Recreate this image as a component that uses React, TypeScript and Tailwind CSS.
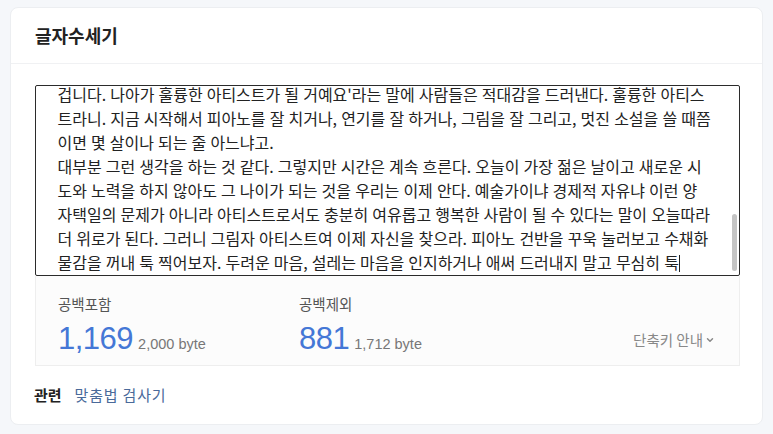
import React from 'react';
import { ChevronDown } from 'lucide-react';

const LINES = [
  "겁니다. 나아가 훌륭한 아티스트가 될 거예요'라는 말에 사람들은 적대감을 드러낸다. 훌륭한 아티스",
  '트라니. 지금 시작해서 피아노를 잘 치거나, 연기를 잘 하거나, 그림을 잘 그리고, 멋진 소설을 쓸 때쯤',
  '이면 몇 살이나 되는 줄 아느냐고.',
  '대부분 그런 생각을 하는 것 같다. 그렇지만 시간은 계속 흐른다. 오늘이 가장 젊은 날이고 새로운 시',
  '도와 노력을 하지 않아도 그 나이가 되는 것을 우리는 이제 안다. 예술가이냐 경제적 자유냐 이런 양',
  '자택일의 문제가 아니라 아티스트로서도 충분히 여유롭고 행복한 사람이 될 수 있다는 말이 오늘따라',
  '더 위로가 된다. 그러니 그림자 아티스트여 이제 자신을 찾으라. 피아노 건반을 꾸욱 눌러보고 수채화',
  '물감을 꺼내 툭 찍어보자. 두려운 마음, 설레는 마음을 인지하거나 애써 드러내지 말고 무심히 툭',
];

const FONT = "font-['Noto_Sans_CJK_KR',sans-serif]";

function Stat({ label, count, bytes }: { label: string; count: string; bytes: string }) {
  return (
    <div className="flex flex-col">
      <span className="text-[14.5px] leading-5 text-[#555]">{label}</span>
      <div className="flex items-baseline mt-[7px]">
        <span className="text-[31px] leading-9 text-[#4477d6] font-['Liberation_Sans',sans-serif] tracking-[-0.5px]">
          {count}
        </span>
        <span className="ml-[5px] text-[14.5px] text-[#777] font-['Liberation_Sans','Noto_Sans_CJK_KR',sans-serif]">
          {bytes}
        </span>
      </div>
    </div>
  );
}

export default function App() {
  return (
    <div className={`min-h-[434px] bg-[#f5f7fa] pl-[10px] pt-[7px] ${FONT}`}>
      <div className="w-[753px] bg-white border border-[#eceef1] rounded-lg">
        {/* 헤더 */}
        <div className="h-[56px] flex items-center px-6 border-b border-[#f0f1f3]">
          <h1 className="text-[18px] font-bold text-[#222] -mt-px">글자수세기</h1>
        </div>

        <div className="pl-6 pr-[22px] pt-[21px]">
          {/* 입력창 (스크롤된 상태) */}
          <div className="relative h-[191px] border-[1.5px] border-[#2b2b2b] rounded-[2px] overflow-hidden flex flex-col justify-end pb-[1px] pl-[21.5px]">
            {LINES.map((line, i) => (
              <div key={i} className="whitespace-nowrap text-[16px] leading-6 text-[#222] [word-spacing:0.5px]">
                {line}
                {i === LINES.length - 1 && <span className="inline-block w-px h-[17px] bg-[#222] align-[-3px]" />}
              </div>
            ))}
            <div className="absolute right-[2px] top-[128px] w-[5px] h-[57px] rounded-full bg-[#c4c4c4]" />
          </div>

          {/* 결과 */}
          <div className="h-[90px] bg-[#fcfcfc] border-x border-b border-[#eeeeee] flex items-end pl-[22px] pr-[24px] pb-[8px]">
            <div className="w-[241px]">
              <Stat label="공백포함" count="1,169" bytes="2,000 byte" />
            </div>
            <Stat label="공백제외" count="881" bytes="1,712 byte" />
            <button className="ml-auto mb-[6px] flex items-center text-[14.5px] text-[#888]">
              단축키 안내
              <ChevronDown className="w-[10px] h-[10px] ml-[2px] text-[#888]" strokeWidth={3.5} />
            </button>
          </div>

          {/* 관련 */}
          <div className="h-[58px] flex items-center text-[15px] -ml-px">
            <span className="font-bold text-[#222]">관련</span>
            <span className="ml-[13px] text-[#4a6a9a] tracking-[0.8px]">맞춤법 검사기</span>
          </div>
        </div>
      </div>
    </div>
  );
}
